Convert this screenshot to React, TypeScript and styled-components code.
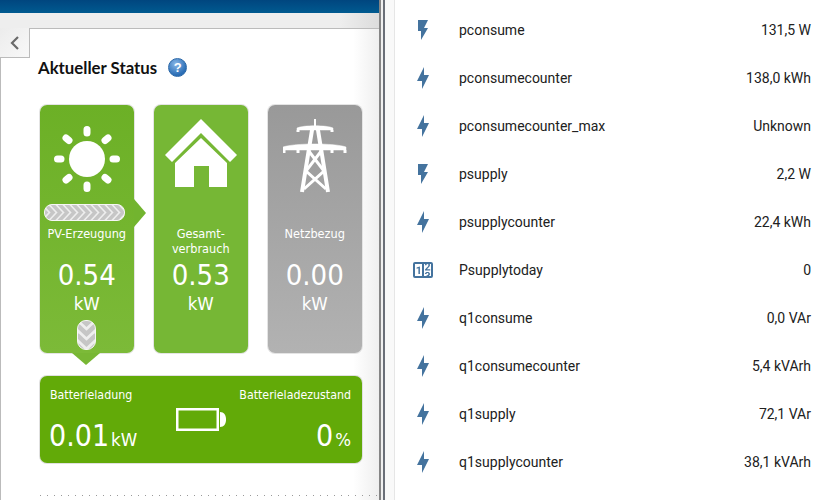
import React from 'react'
import styled, { createGlobalStyle } from 'styled-components'

const GlobalStyle = createGlobalStyle`
  html, body {
    margin: 0;
    padding: 0;
    background: #fff;
  }
`

const condensed = `'DejaVu Sans Condensed', 'DejaVu Sans', sans-serif`

const Page = styled.div`
  display: flex;
  width: 826px;
  height: 500px;
  overflow: hidden;
  font-family: Roboto, sans-serif;
`

const LeftPane = styled.div`
  width: 379px;
  flex: none;
  display: flex;
  flex-direction: column;
`

const TopBar = styled.div`
  height: 13px;
  flex: none;
  background: linear-gradient(#00467f, #005a90);
`

const TabRow = styled.div`
  height: 15px;
  flex: none;
  background: linear-gradient(90deg, #eee 340px, #dcdcdc);
`

const Body = styled.div`
  position: relative;
  flex: 1;
  box-sizing: border-box;
  padding: 26px 0 0 37px;
  background: linear-gradient(90deg, #fff 352px, #eee 379px);
  border-top: 1px solid #bbb;
  border-left: 1px solid #bbb;
`

const BackTab = styled.div`
  position: absolute;
  left: -1px;
  top: -1px;
  width: 30px;
  height: 30px;
  display: flex;
  align-items: center;
  justify-content: center;
  box-sizing: border-box;
  background: linear-gradient(135deg, #ececec, #f8f8f8);
  border-bottom: 1px solid #bbb;
  border-right: 1px solid #bbb;
  color: #6a6a6a;
`

const HeadRow = styled.div`
  display: flex;
  align-items: center;
  gap: 11px;
  height: 24px;
`

const Title = styled.h1`
  margin: 0;
  font-family: Lato, sans-serif;
  font-size: 16.8px;
  font-weight: 700;
  color: #111;
`

const HelpBadge = styled.div`
  width: 19px;
  height: 19px;
  border-radius: 50%;
  border: 1px solid #2a67a8;
  box-sizing: border-box;
  background: radial-gradient(circle at 40% 30%, #8ab8e8, #2a6db5 70%);
  color: #fff;
  font: 700 13px/17px 'Liberation Sans', sans-serif;
  text-align: center;
`

const Cards = styled.div`
  display: flex;
  gap: 20.5px;
  margin: 26px 0 0 2px;
`

const Card = styled.div<{ $tone: string }>`
  position: relative;
  width: 93.5px;
  height: 248px;
  box-sizing: border-box;
  border-radius: 7px;
  background: ${(p) => p.$tone};
  box-shadow: 0 0 0 1px #e4e4e4;
  color: #fff;
  display: flex;
  flex-direction: column;
  align-items: center;
`

const TailRight = styled.div`
  position: absolute;
  right: -12px;
  top: 94px;
  width: 0;
  height: 0;
  border-top: 14px solid transparent;
  border-bottom: 14px solid transparent;
  border-left: 12px solid #72b42f;
`

const TailDown = styled.div`
  position: absolute;
  left: 32px;
  bottom: -12px;
  width: 0;
  height: 0;
  border-left: 14px solid transparent;
  border-right: 14px solid transparent;
  border-top: 12px solid #78b734;
`

const IconSlot = styled.div<{ $top: number }>`
  height: 99px;
  flex: none;
  box-sizing: border-box;
  padding-top: ${(p) => p.$top}px;
  display: flex;
  justify-content: center;
  align-items: flex-start;
`

const HBar = styled.div`
  width: 81px;
  height: 17px;
  margin-right: 4px;
  flex: none;
  box-sizing: border-box;
  overflow: hidden;
  border: 1px solid #f6f6f6;
  border-radius: 8px;
  background: #eee;
  display: flex;
`

const CardLabel = styled.div<{ $top: number }>`
  margin-top: ${(p) => p.$top}px;
  height: 31px;
  font-family: ${condensed};
  font-size: 12.6px;
  line-height: 15px;
  text-align: center;
  flex: none;
`

const Value = styled.div`
  font-family: ${condensed};
  font-size: 29px;
  line-height: 36px;
  flex: none;
`

const Unit = styled.div`
  font-family: ${condensed};
  font-size: 18.5px;
  line-height: 22px;
  flex: none;
`

const VBar = styled.div`
  width: 19px;
  height: 30px;
  margin-top: 5px;
  flex: none;
  box-sizing: border-box;
  overflow: hidden;
  border: 1px solid #f6f6f6;
  border-radius: 9px;
  background: #eee;
  display: flex;
`

const BatteryCard = styled.div`
  width: 322px;
  height: 87px;
  margin: 23px 0 0 2px;
  box-sizing: border-box;
  border-radius: 7px;
  background: #62aa08;
  box-shadow: 0 0 0 1px #e0e0e0;
  color: #fff;
  padding: 10px 11px 0 10px;
  display: grid;
  grid-template-columns: 1fr auto 1fr;
  font-family: ${condensed};
`

const BatterySide = styled.div<{ $right?: boolean }>`
  display: flex;
  flex-direction: column;
  align-items: ${(p) => (p.$right ? 'flex-end' : 'flex-start')};
`

const BatteryLabel = styled.div`
  font-size: 12.3px;
  line-height: 18px;
  white-space: nowrap;
`

const BatteryValue = styled.div`
  display: flex;
  align-items: baseline;
  gap: 2px;
  margin: 13px 0 0 -1px;
  font-size: 30px;
  line-height: 38px;
`

const BatteryUnit = styled.span`
  font-size: 18.5px;
`

const BatteryIcon = styled.div`
  padding: 22px 0 0 1px;
`

const Dots = styled.div`
  height: 1px;
  margin: 32px 0 0 2px;
  background: repeating-linear-gradient(90deg, #999 0 1px, transparent 1px 7px);
`

const Divider = styled.div`
  width: 6px;
  flex: none;
  background: linear-gradient(90deg, #858585 0 2px, #f0f0f0 2px 4px, #6a6f78 4px 6px);
`

const Gutter = styled.div`
  width: 10px;
  flex: none;
  box-sizing: border-box;
  background: #f9f9f9;
  border-right: 1px solid #e6e6e6;
`

const List = styled.div`
  flex: 1;
  padding: 6px 15px 0 16px;
  min-width: 0;
`

const Row = styled.div`
  display: flex;
  align-items: center;
  height: 48px;
  font-size: 14px;
  color: #212121;
`

const RowIcon = styled.div`
  width: 48px;
  flex: none;
  display: flex;
  color: #44739e;
`

const RowName = styled.div`
  flex: 1;
`

const Mdi = ({ d }: { d: string }) => (
  <svg width="24" height="24" viewBox="0 0 24 24" fill="currentColor">
    <path d={d} />
  </svg>
)

const flash = 'M7,2V13H10V22L17,10H13L17,2H7Z'
const bolt = 'M11 15H6L13 1V9H18L11 23V15Z'
const counter =
  'M4,4H20A2,2 0 0,1 22,6V18A2,2 0 0,1 20,20H4A2,2 0 0,1 2,18V6A2,2 0 0,1 4,4M4,6V18H11V6H4M20,18V6H18.76C19,6.54 18.95,7.07 18.95,7.13C18.88,7.8 18.41,8.5 18.24,8.75L15.91,11.3L19.23,11.28L19.24,12.5L14.04,12.47L14,11.47C14,11.47 17.05,8.24 17.2,7.95C17.34,7.67 17.91,6 16.5,6C15.27,6.05 15.41,7.3 15.41,7.3L13.87,7.31C13.87,7.31 13.88,6.65 14.25,6H13V18H15.58L15.57,17.14L16.54,17.13C16.54,17.13 17.45,16.97 17.46,16.08C17.5,15.08 16.65,15.08 16.5,15.08C16.37,15.08 15.43,15.13 15.43,15.95H13.91C13.91,15.95 13.95,13.89 16.5,13.89C19.1,13.89 18.96,15.91 18.96,15.91C18.96,15.91 19,17.16 17.85,17.63L18.37,18H20M8.92,16H7.42V10.2L5.62,10.76V9.53L8.76,8.41H8.92V16Z'

const Sun = () => (
  <svg width="68" height="68" viewBox="0 0 68 68" fill="#fff">
    <circle cx="34" cy="34" r="18" />
    <g stroke="#fff" strokeWidth="7" strokeLinecap="round">
      <path d="M34 4.500v3.500M34 60v3.500M4.500 34h3.500M60 34h3.500M13 13l3 2.500M52 52.500l3 2.500M13 55l3-2.500M52 15.500 55 13" />
    </g>
  </svg>
)

const House = () => (
  <svg width="72" height="68" viewBox="0 0 72 68" fill="#fff">
    <path d="M36 0 72 36l-7 7L36 14 7 43l-7-7z" />
    <path fillRule="evenodd" d="M36 19 10 44v24h52V44zM29 47h15v21H29z" />
  </svg>
)

const Pylon = () => (
  <svg width="64" height="74" viewBox="0 0 64 74" fill="none" stroke="#fff">
    <path d="M32 0v8" strokeWidth="2" />
    <path d="M14 9c6-3 30-3 36 0v2H14zM0 28c12-4 52-4 63 0v3H0z" fill="#fff" strokeWidth="0.500" />
    <path d="M15 11v2M49 11v2M1 31v3M15 31v3M49 31v3M62 31v3" strokeWidth="3" />
    <path d="M29.500 8 19 73M34.500 8 45 73" strokeWidth="4" />
    <path d="M25 31 41 52 21 70M39 31 23 52 43 70" strokeWidth="3" />
  </svg>
)

const Battery = () => (
  <svg width="50" height="24" viewBox="0 0 50 24" fill="#fff">
    <path fillRule="evenodd" d="M0 0h43v23H0zM2.500 2.500v18h38v-18z" />
    <path d="M44 4c4 0 6 3 6 7.500S48 19 44 19z" />
  </svg>
)

const ChevronsRight = () => (
  <svg width="79" height="15" viewBox="0 0 79 15" fill="none" stroke="#c6c6c6" strokeWidth="3.500">
    {[-7, 0, 7, 14, 21, 28, 35, 42, 49, 56, 63, 70].map((x) => (
      <path key={x} d={`M${x} -1 L${x + 8} 7.500 L${x} 16`} />
    ))}
  </svg>
)

const ChevronsDown = () => (
  <svg width="17" height="28" viewBox="0 0 17 28" fill="none" stroke="#c6c6c6" strokeWidth="4.500">
    {[-6, 4, 14, 24].map((y) => (
      <path key={y} d={`M-1 ${y} L8.500 ${y + 9} L18 ${y}`} />
    ))}
  </svg>
)

const rows: { name: string; value: string; icon: string }[] = [
  { name: 'pconsume', value: '131,5 W', icon: flash },
  { name: 'pconsumecounter', value: '138,0 kWh', icon: bolt },
  { name: 'pconsumecounter_max', value: 'Unknown', icon: bolt },
  { name: 'psupply', value: '2,2 W', icon: flash },
  { name: 'psupplycounter', value: '22,4 kWh', icon: bolt },
  { name: 'Psupplytoday', value: '0', icon: counter },
  { name: 'q1consume', value: '0,0 VAr', icon: bolt },
  { name: 'q1consumecounter', value: '5,4 kVArh', icon: bolt },
  { name: 'q1supply', value: '72,1 VAr', icon: bolt },
  { name: 'q1supplycounter', value: '38,1 kVArh', icon: bolt },
]

const App = () => {
  return (
    <Page>
      <GlobalStyle />
      <LeftPane>
        <TopBar />
        <TabRow />
        <Body>
          <BackTab>
            <svg width="12" height="14" viewBox="0 0 12 14" fill="none" stroke="currentColor" strokeWidth="2.200">
              <path d="M9 1 3 7l6 6" />
            </svg>
          </BackTab>
          <HeadRow>
            <Title>Aktueller Status</Title>
            <HelpBadge>?</HelpBadge>
          </HeadRow>
          <Cards>
            <Card $tone="linear-gradient(#6cb026, #7cba38)">
              <TailRight />
              <TailDown />
              <IconSlot $top={20}>
                <Sun />
              </IconSlot>
              <HBar>
                <ChevronsRight />
              </HBar>
              <CardLabel $top={5}>PV-Erzeugung</CardLabel>
              <Value>0.54</Value>
              <Unit>kW</Unit>
              <VBar>
                <ChevronsDown />
              </VBar>
            </Card>
            <Card $tone="#76b735">
              <IconSlot $top={14}>
                <House />
              </IconSlot>
              <CardLabel $top={22}>
                Gesamt-
                <br />
                verbrauch
              </CardLabel>
              <Value>0.53</Value>
              <Unit>kW</Unit>
            </Card>
            <Card $tone="linear-gradient(#999, #b2b2b2)">
              <IconSlot $top={14}>
                <Pylon />
              </IconSlot>
              <CardLabel $top={22}>Netzbezug</CardLabel>
              <Value>0.00</Value>
              <Unit>kW</Unit>
            </Card>
          </Cards>
          <BatteryCard>
            <BatterySide>
              <BatteryLabel>Batterieladung</BatteryLabel>
              <BatteryValue>
                0.01<BatteryUnit>kW</BatteryUnit>
              </BatteryValue>
            </BatterySide>
            <BatteryIcon>
              <Battery />
            </BatteryIcon>
            <BatterySide $right>
              <BatteryLabel>Batterieladezustand</BatteryLabel>
              <BatteryValue>
                0<BatteryUnit>%</BatteryUnit>
              </BatteryValue>
            </BatterySide>
          </BatteryCard>
          <Dots />
        </Body>
      </LeftPane>
      <Divider />
      <Gutter />
      <List>
        {rows.map((r) => (
          <Row key={r.name}>
            <RowIcon>
              <Mdi d={r.icon} />
            </RowIcon>
            <RowName>{r.name}</RowName>
            <span>{r.value}</span>
          </Row>
        ))}
      </List>
    </Page>
  )
}

export default App
